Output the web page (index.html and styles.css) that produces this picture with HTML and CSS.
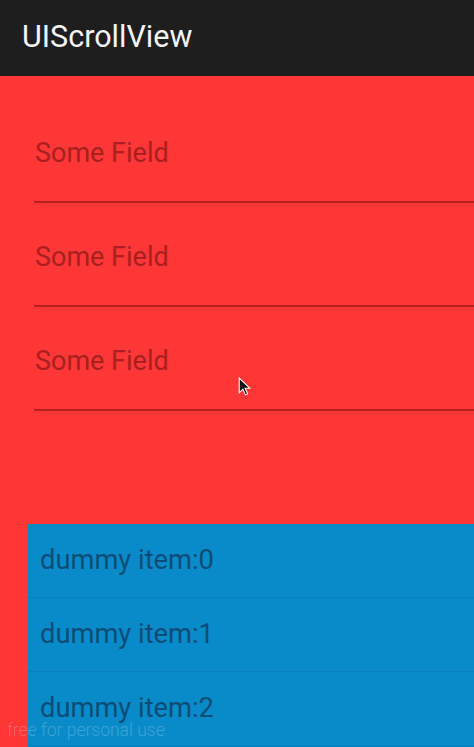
FILE: index.html
```html
<!DOCTYPE html>
<html>
<head>
<meta charset="utf-8">
<link rel="stylesheet" href="styles.css">
</head>
<body>
<div class="screen">
  <header class="bar"><span class="title">UIScrollView</span></header>
  <main class="scroll">
    <section class="fields">
      <div class="field">Some Field</div>
      <div class="field">Some Field</div>
      <div class="field">Some Field</div>
    </section>
    <section class="list">
      <div class="item">dummy item:0</div>
      <div class="item">dummy item:1</div>
      <div class="item">dummy item:2</div>
    </section>
  </main>
  <svg class="cursor" width="14" height="20" viewBox="0 0 13 19"><path d="M1 1 L1 15 L4.5 11.5 L7 17 L9 16 L6.6 10.6 L11 10.6 Z" fill="#111" stroke="#fff" stroke-width="1"/></svg>
  <div class="watermark">free for personal use</div>
</div>
</body>
</html>
```
FILE: styles.css
```css
html, body {
  margin: 0;
  padding: 0;
  width: 474px;
  height: 747px;
  overflow: hidden;
  background: #fe3636;
  font-family: Roboto, "Noto Sans", sans-serif;
}
.screen {
  position: relative;
  width: 474px;
  height: 747px;
  display: flex;
  flex-direction: column;
  overflow: hidden;
}
.bar {
  height: 76px;
  flex: none;
  background: #1e1e1e;
  display: flex;
  align-items: center;
  padding-left: 22px;
  box-sizing: border-box;
}
.title {
  color: #f4f4f4;
  font-size: 30.5px;
  line-height: 34px;
  margin-top: -2px;
}
.scroll {
  flex: 1;
  display: flex;
  flex-direction: column;
  background: #fe3636;
}
.fields {
  padding-top: 23px;
  padding-left: 34px;
}
.field {
  font-size: 27px;
  line-height: 32px;
  color: #a92020;
  padding: 38px 0 32px 1px;
  border-bottom: 2px solid #b42222;
}
.list {
  margin-top: 113px;
  margin-left: 28px;
  flex: 1;
  background: #0a8bc9;
}
.item {
  font-size: 27.3px;
  line-height: 32px;
  color: #0c4d78;
  padding: 20px 0 21px 12px;
  border-bottom: 1px solid #0880bb;
}
.cursor {
  position: absolute;
  left: 238px;
  top: 377px;
}
.watermark {
  position: absolute;
  left: 7px;
  top: 720px;
  font-size: 17.5px;
  font-weight: 300;
  color: rgba(255, 255, 255, 0.22);
}
```
